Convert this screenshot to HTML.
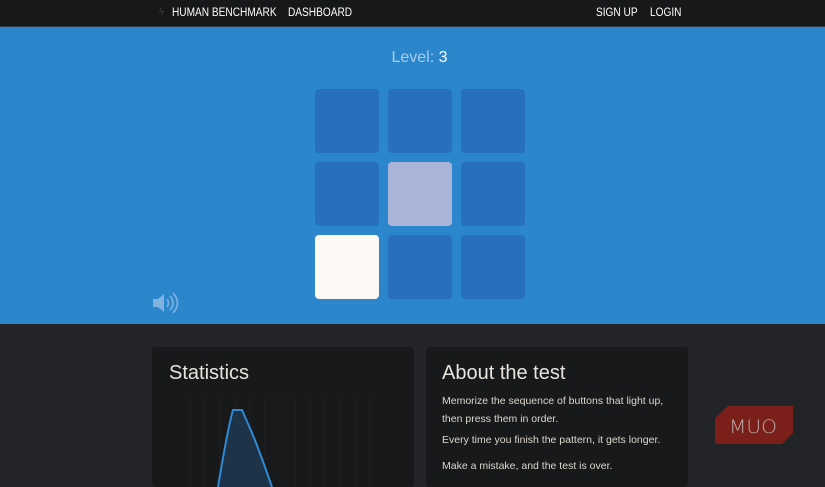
<!DOCTYPE html><html><head><style>
body{margin:0;width:825px;height:478px;overflow:hidden;background:#232427;font-family:"Liberation Sans",sans-serif;position:relative}
.nav{position:absolute;top:0;left:0;width:825px;height:26px;background:#17181a;border-bottom:1px solid #2a3a4a;color:#fff;font-size:11.5px}
.nav span{position:absolute;top:7px;transform:scaleX(0.88);transform-origin:left}
.blue{position:absolute;top:27px;left:0;width:825px;height:297px;background:#2b86cb}
.t{position:absolute;width:64px;height:64px;border-radius:4px;background:#2670be}
.card{position:absolute;top:347px;height:140px;background:#18191b;border-radius:3px}
h2{font-weight:normal;margin:0;position:absolute;font-size:20px;color:#e8e4dc}
p{margin:0;position:absolute;left:16px;font-size:10.5px;color:#ddd8cc}
</style></head><body>
<div class="nav"><span style="left:159px;color:#444;font-size:10px;top:7px">ϟ</span><span style="left:172px">HUMAN BENCHMARK</span><span style="left:288px">DASHBOARD</span><span style="left:596px">SIGN UP</span><span style="left:650px">LOGIN</span></div>
<div class="blue">
<div style="position:absolute;top:22px;left:7px;width:825px;text-align:center;font-size:16px;color:#a8cdec">Level: <span style="color:#fff">3</span></div>
<div class="t" style="left:315px;top:62px"></div><div class="t" style="left:388px;top:62px"></div><div class="t" style="left:461px;top:62px"></div>
<div class="t" style="left:315px;top:135px"></div><div class="t" style="left:388px;top:135px;background:#aab4d8"></div><div class="t" style="left:461px;top:135px"></div>
<div class="t" style="left:315px;top:208px;background:#fdf8f4"></div><div class="t" style="left:388px;top:208px"></div><div class="t" style="left:461px;top:208px"></div>
<svg style="position:absolute;left:152px;top:265px" width="28" height="22" viewBox="0 0 28 22"><path d="M1 7h5l6-5v18l-6-5H1z" fill="#7fb3e0"/><path d="M15 7q3 4 0 8M18 4q6 7 0 14M21 1q9 10 0 20" stroke="#7fb3e0" stroke-width="1.6" fill="none"/></svg>
</div>
<div class="card" style="left:152px;width:262px">
<h2 style="left:17px;top:15px">Statistics</h2>
<svg style="position:absolute;left:28px;top:50px" width="200" height="90"><g stroke="#1d1e21" stroke-width="1"><path d="M10 0v90M25 0v90M40 0v90M55 0v90M70 0v90M85 0v90M100 0v90M115 0v90M130 0v90M145 0v90M160 0v90M175 0v90M190 0v90"/></g><path d="M38 90Q48 30 53 13H62Q66 22 72 36T92 90Z" fill="#1e3347"/><path d="M38 90Q48 30 53 13H62Q66 22 72 36T92 90" stroke="#2e8ad4" stroke-width="2" fill="none"/></svg>
</div>
<div class="card" style="left:426px;width:262px">
<h2 style="left:16px;top:15px">About the test</h2>
<p style="top:45px;line-height:18px">Memorize the sequence of buttons that light up,<br>then press them in order.</p>
<p style="top:87px">Every time you finish the pattern, it gets longer.</p>
<p style="top:113px">Make a mistake, and the test is over.</p>
</div>
<svg style="position:absolute;left:715px;top:406px" width="79" height="39"><path d="M13 0H78V33L72 38H0V12Z" fill="#7a1f1a"/><path d="M79 26V38H67Z" fill="#232427"/><text x="14" y="27" font-size="19" fill="#b9a9a6" font-family="DejaVu Sans" textLength="48" lengthAdjust="spacingAndGlyphs" style="font-weight:200">MUO</text></svg>
</body></html>
